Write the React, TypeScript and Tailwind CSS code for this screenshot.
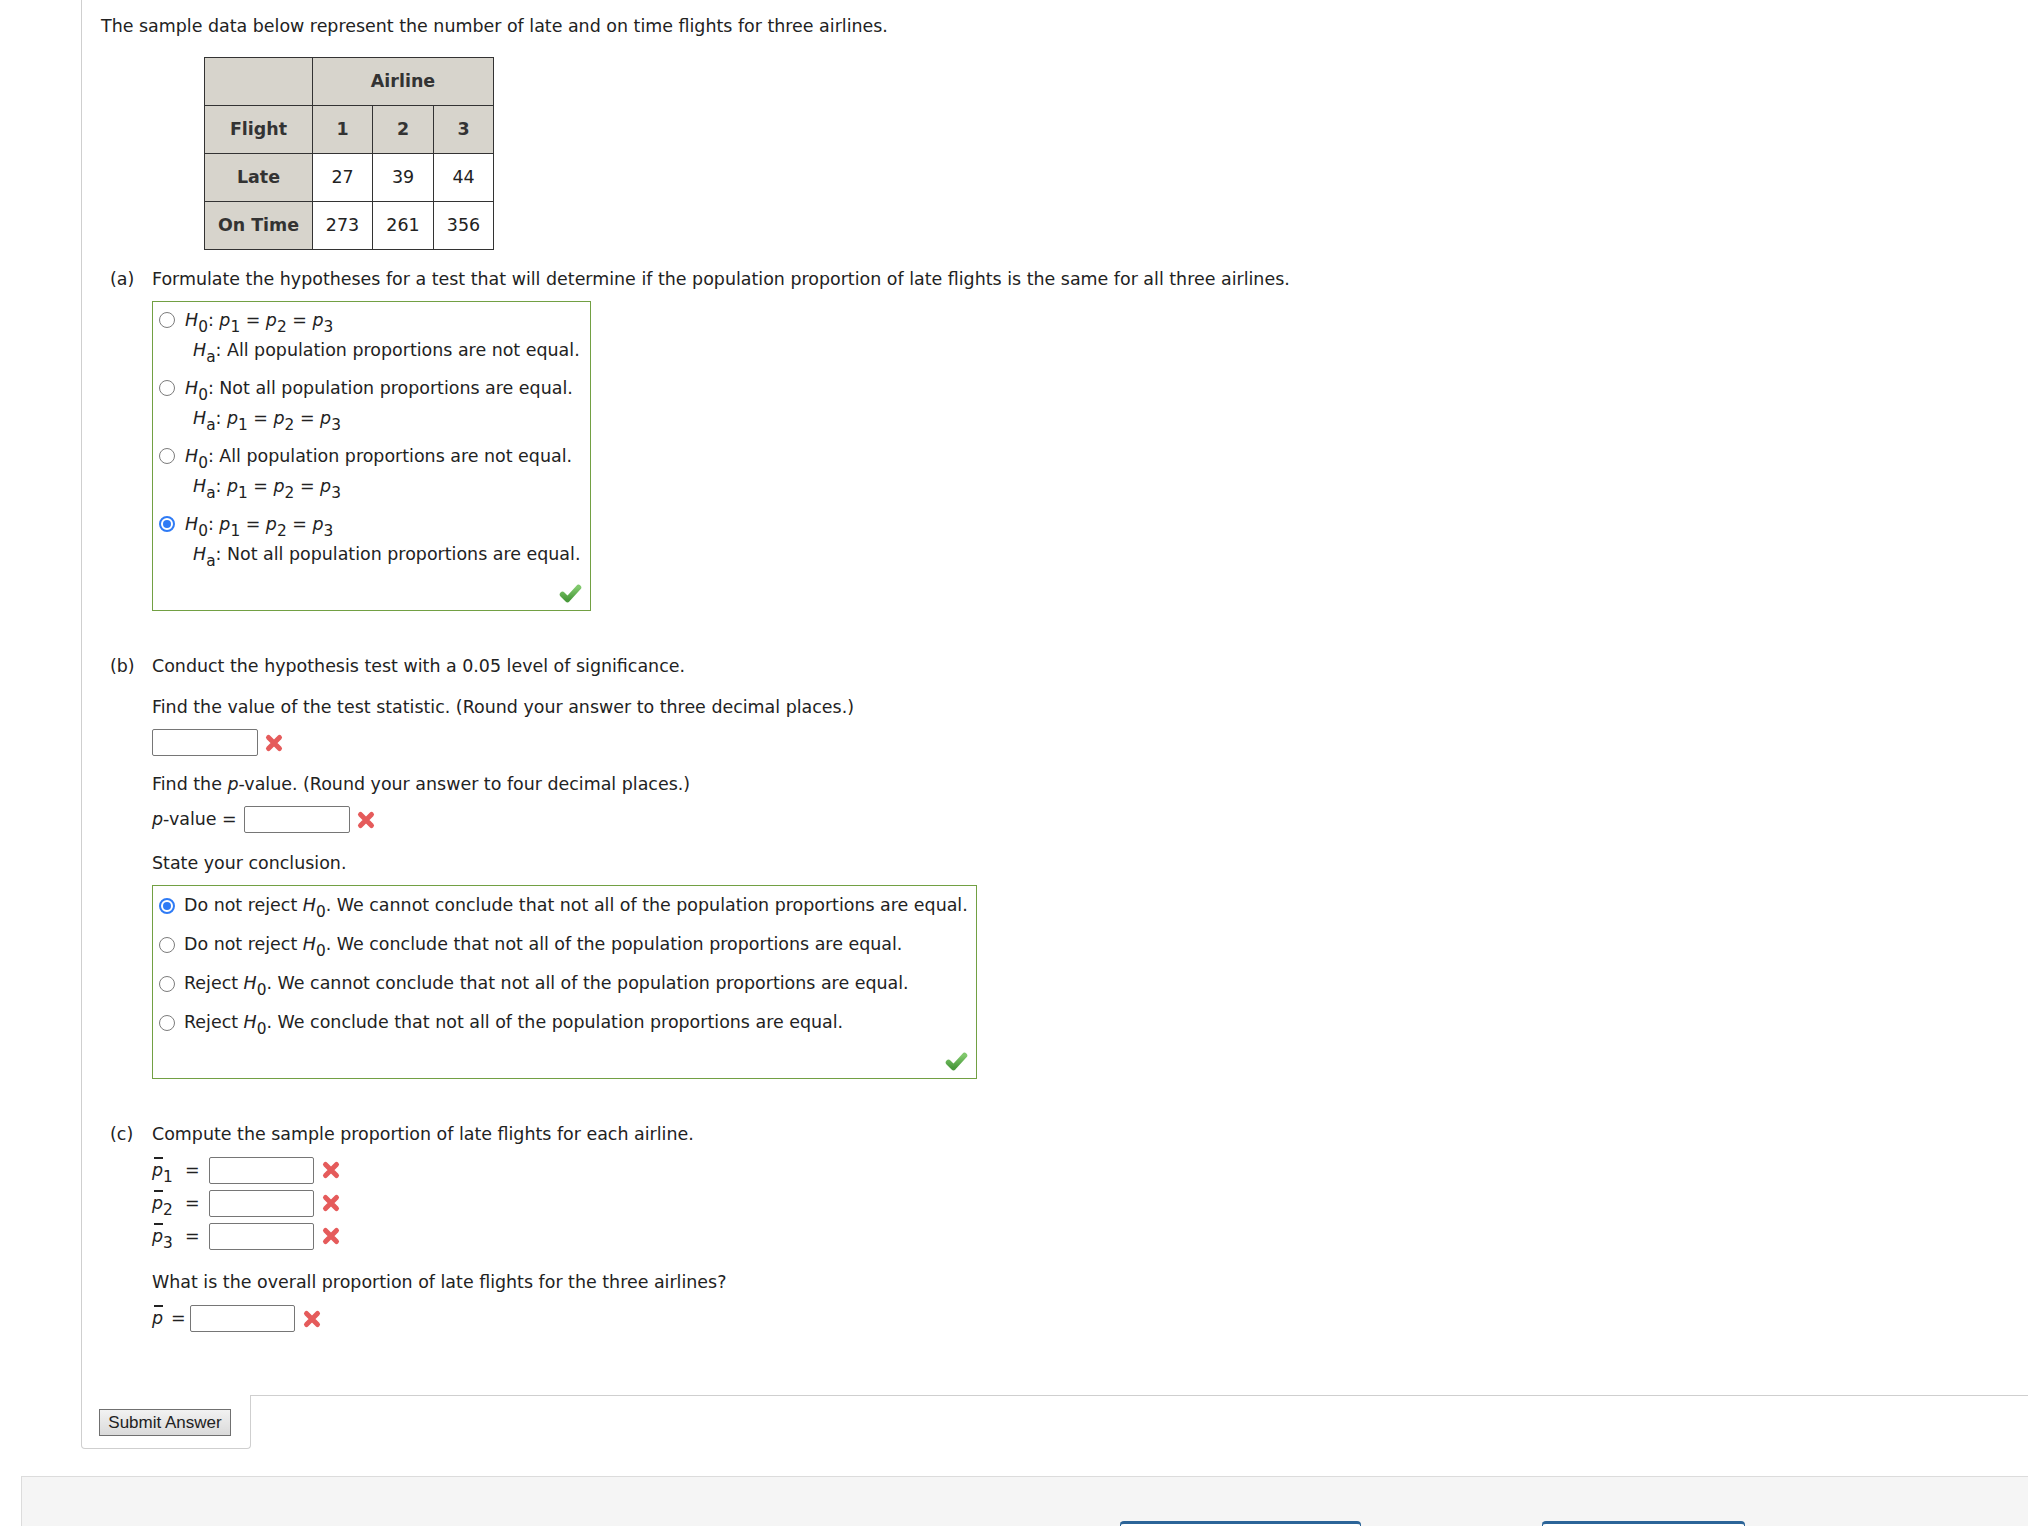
import React from 'react';

const Sub = ({ children }: { children: React.ReactNode }) => (
  <span className="relative top-[0.38em] text-[88%] not-italic leading-none">{children}</span>
);

const H = ({ s }: { s: string }) => (
  <span>
    <i>H</i>
    <Sub>{s}</Sub>
  </span>
);

const P = ({ s }: { s?: string }) => (
  <span>
    <i>p</i>
    {s && <Sub>{s}</Sub>}
  </span>
);

const Pbar = ({ s }: { s?: string }) => (
  <span>
    <i className="relative">
      <span className="absolute left-[2px] top-[-3px] w-[9px] h-[2px] bg-[#222]" />p
    </i>
    {s && <Sub>{s}</Sub>}
  </span>
);

const Equal = () => (
  <span>
    <P s="1" /> = <P s="2" /> = <P s="3" />
  </span>
);

const Radio = ({ checked }: { checked?: boolean }) =>
  checked ? (
    <span className="inline-flex w-4 h-4 shrink-0 rounded-full border-2 border-[#2f7bf5] bg-white p-[2px]">
      <span className="block w-full h-full rounded-full bg-[#2f7bf5]" />
    </span>
  ) : (
    <span className="inline-block w-4 h-4 shrink-0 rounded-full border border-[#7c7c7c] bg-white" />
  );

const Check = () => (
  <svg width="23" height="19" viewBox="0 0 23 19">
    <defs>
      <linearGradient id="ck" x1="0" y1="0" x2="0" y2="1">
        <stop offset="0" stopColor="#80c86c" />
        <stop offset="1" stopColor="#4a9a3c" />
      </linearGradient>
    </defs>
    <path d="M3.5 10.5 L8.5 15.5 L19.5 3.5" fill="none" stroke="url(#ck)" strokeWidth="5.5" strokeLinecap="round" strokeLinejoin="round" />
  </svg>
);

const Cross = () => (
  <svg width="20" height="20" viewBox="0 0 20 20" className="shrink-0">
    <path d="M4.5 4.5 L15.5 15.5 M15.5 4.5 L4.5 15.5" fill="none" stroke="#e55b5b" strokeWidth="5" strokeLinecap="round" />
  </svg>
);

const Input = ({ w = 'w-[106px]' }: { w?: string }) => (
  <span className={`inline-block ${w} h-[27px] border border-[#767676] rounded-[2px] bg-white shrink-0`} />
);

const Section = ({ label, children, className = '' }: { label: string; children: React.ReactNode; className?: string }) => (
  <div className={`flex ml-[9px] ${className}`}>
    <div className="w-[42px] shrink-0 leading-[28px]">{label}</div>
    <div className="flex flex-col">{children}</div>
  </div>
);

const hypotheses = [
  { h0: <Equal />, ha: <>All population proportions are not equal.</> },
  { h0: <>Not all population proportions are equal.</>, ha: <Equal /> },
  { h0: <>All population proportions are not equal.</>, ha: <Equal /> },
  { h0: <Equal />, ha: <>Not all population proportions are equal.</>, checked: true },
];

const conclusions = [
  { pre: 'Do not reject ', post: ' We cannot conclude that not all of the population proportions are equal.', checked: true },
  { pre: 'Do not reject ', post: ' We conclude that not all of the population proportions are equal.' },
  { pre: 'Reject ', post: ' We cannot conclude that not all of the population proportions are equal.' },
  { pre: 'Reject ', post: ' We conclude that not all of the population proportions are equal.' },
];

export default function App() {
  const th = 'border border-[#333] bg-[#d7d4cc] font-bold text-[#333] text-center';
  const td = 'border border-[#333] bg-white text-center';
  return (
    <div className="w-[2028px] h-[1526px] overflow-hidden bg-white text-[#222] text-[17.45px] font-['DejaVu_Sans',sans-serif]">
      <div className="ml-[81px]">
        <div className="border-l border-[#cfcfcf] pl-[19px] pt-[12px] pb-[63px]">
          <p className="leading-[28px]">The sample data below represent the number of late and on time flights for three airlines.</p>

          <table className="mt-[17px] ml-[103px] border-collapse">
            <tbody>
              <tr className="h-[48px]">
                <td className={`${th} w-[108px]`} />
                <td className={th} colSpan={3}>Airline</td>
              </tr>
              <tr className="h-[48px]">
                <td className={th}>Flight</td>
                <td className={`${th} w-[60px]`}>1</td>
                <td className={`${th} w-[61px]`}>2</td>
                <td className={`${th} w-[60px]`}>3</td>
              </tr>
              <tr className="h-[48px]">
                <td className={th}>Late</td>
                <td className={td}>27</td>
                <td className={td}>39</td>
                <td className={td}>44</td>
              </tr>
              <tr className="h-[48px]">
                <td className={th}>On Time</td>
                <td className={td}>273</td>
                <td className={td}>261</td>
                <td className={td}>356</td>
              </tr>
            </tbody>
          </table>

          <Section label="(a)" className="mt-[15px]">
            <p className="leading-[28px]">Formulate the hypotheses for a test that will determine if the population proportion of late flights is the same for all three airlines.</p>
            <div className="mt-[8px] w-[439px] border border-[#72a043] pl-[6px] pt-[3px] pr-[8px] pb-[7px] flex flex-col">
              <div className="flex flex-col gap-[8px]">
                {hypotheses.map((o, i) => (
                  <div key={i} className="flex flex-col leading-[30px]">
                    <div className="flex items-center gap-[10px]">
                      <Radio checked={o.checked} />
                      <span>
                        <H s="0" />: {o.h0}
                      </span>
                    </div>
                    <div className="ml-[34px]">
                      <H s="a" />: {o.ha}
                    </div>
                  </div>
                ))}
              </div>
              <div className="mt-[15px] flex justify-end">
                <Check />
              </div>
            </div>
          </Section>

          <Section label="(b)" className="mt-[41px]">
            <p className="leading-[28px]">Conduct the hypothesis test with a 0.05 level of significance.</p>
            <p className="mt-[13px] leading-[28px]">Find the value of the test statistic. (Round your answer to three decimal places.)</p>
            <div className="mt-[8px] flex items-center gap-[6px]">
              <Input />
              <Cross />
            </div>
            <p className="mt-[14px] leading-[28px]">
              Find the <i>p</i>-value. (Round your answer to four decimal places.)
            </p>
            <div className="mt-[8px] flex items-center">
              <span className="leading-[27px] mr-[7px]">
                <i>p</i>-value =
              </span>
              <Input />
              <span className="ml-[6px]">
                <Cross />
              </span>
            </div>
            <p className="mt-[16px] leading-[28px]">State your conclusion.</p>
            <div className="mt-[8px] w-[825px] border border-[#72a043] pl-[6px] pr-[8px] pb-[7px] flex flex-col">
              {conclusions.map((c, i) => (
                <div key={i} className="h-[39px] flex items-center gap-[9px]">
                  <Radio checked={c.checked} />
                  <span>
                    {c.pre}
                    <H s="0" />.{c.post}
                  </span>
                </div>
              ))}
              <div className="mt-[10px] flex justify-end">
                <Check />
              </div>
            </div>
          </Section>

          <Section label="(c)" className="mt-[41px]">
            <p className="leading-[28px]">Compute the sample proportion of late flights for each airline.</p>
            <div className="mt-[9px] flex flex-col gap-[7px]">
              {['1', '2', '3'].map((s) => (
                <div key={s} className="flex items-center h-[26px]">
                  <span className="w-[33px] leading-[26px]">
                    <Pbar s={s} />
                  </span>
                  <span className="w-[24px]">=</span>
                  <Input w="w-[105px]" />
                  <span className="ml-[7px]">
                    <Cross />
                  </span>
                </div>
              ))}
            </div>
            <p className="mt-[19px] leading-[28px]">What is the overall proportion of late flights for the three airlines?</p>
            <div className="mt-[9px] flex items-center h-[27px]">
              <span className="w-[19px]">
                <Pbar />
              </span>
              <span className="w-[19px]">=</span>
              <Input w="w-[105px]" />
              <span className="ml-[7px]">
                <Cross />
              </span>
            </div>
          </Section>
        </div>

        <div className="flex">
          <div className="w-[170px] h-[54px] border-l border-r border-b border-[#cfcfcf] rounded-b-[4px] pl-[17px] pt-[14px]">
            <button className="w-[132px] h-[27px] border border-[#707070] bg-gradient-to-b from-[#f2f2f2] to-[#dadada] text-[17px] leading-none text-[#222] font-['Liberation_Sans',Arial,sans-serif]">
              Submit Answer
            </button>
          </div>
          <div className="flex-1 border-t border-[#cfcfcf]" />
        </div>
      </div>

      <div className="ml-[21px] mt-[27px] h-[60px] overflow-hidden bg-[#f5f5f5] border-t border-l border-[#dcdcdc] pl-[1098px] pt-[44px] flex gap-[181px]">
        <div className="w-[241px] h-[40px] bg-white border-t-[3px] border-x border-[#2b6498] rounded-t-[4px]" />
        <div className="w-[203px] h-[40px] bg-white border-t-[3px] border-x border-[#2b6498] rounded-t-[4px]" />
      </div>
    </div>
  );
}
